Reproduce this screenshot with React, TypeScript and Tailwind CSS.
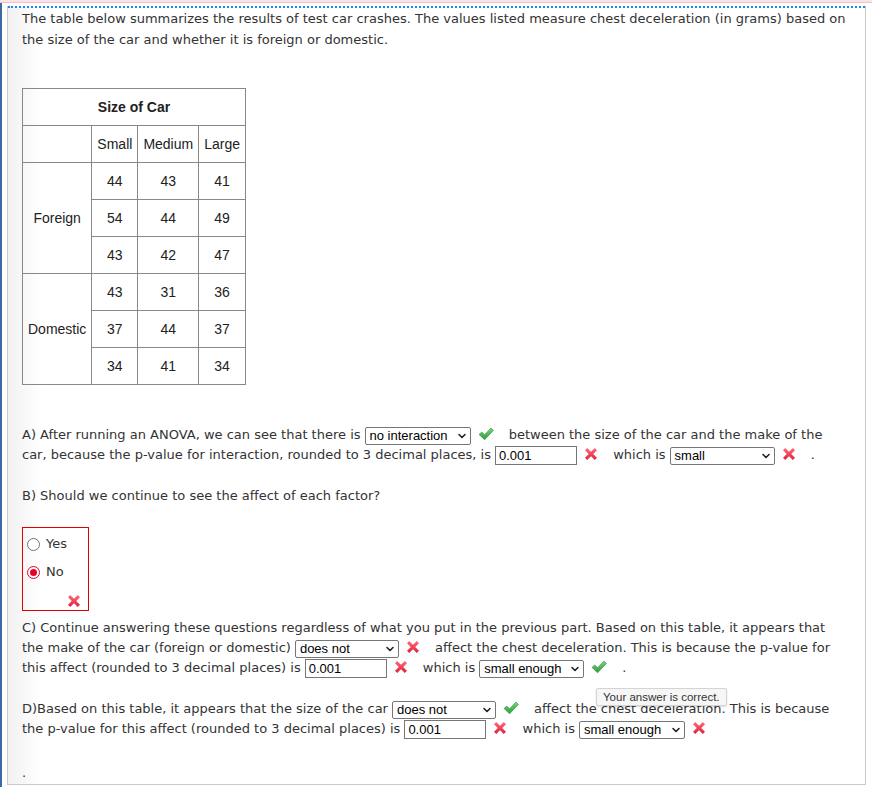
import React from 'react';

const Check = () => (
  <svg width="16" height="14" viewBox="0 0 16 14" className="inline-block align-[-2px]">
    <defs>
      <linearGradient id="cg" x1="0" y1="0" x2="0" y2="1">
        <stop offset="0" stopColor="#7fd67f" />
        <stop offset="1" stopColor="#2c9a3c" />
      </linearGradient>
    </defs>
    <path d="M1 7.5 L3.8 5 L6.6 7.8 L13 1 L15.4 3.4 L6.6 12.8 Z" fill="url(#cg)" stroke="#2f8f3a" strokeWidth="0.6" />
  </svg>
);

const Cross = () => (
  <svg width="14" height="14" viewBox="0 0 14 14" className="inline-block align-[-2px]">
    <defs>
      <linearGradient id="xg" x1="0" y1="0" x2="0" y2="1">
        <stop offset="0" stopColor="#ff6b7d" />
        <stop offset="1" stopColor="#e0203a" />
      </linearGradient>
    </defs>
    <path
      d="M1 3.2 L3.2 1 L7 4.8 L10.8 1 L13 3.2 L9.2 7 L13 10.8 L10.8 13 L7 9.2 L3.2 13 L1 10.8 L4.8 7 Z"
      fill="url(#xg)"
    />
  </svg>
);

const Chevron = () => (
  <svg width="10" height="10" viewBox="0 0 10 10" className="shrink-0">
    <path d="M2 3.5 L5 6.5 L8 3.5" fill="none" stroke="#222" strokeWidth="1.6" strokeLinecap="round" strokeLinejoin="round" />
  </svg>
);

const Select = ({ w, label }: { w: string; label: string }) => (
  <span
    className={`inline-flex ${w} h-[18px] items-center justify-between align-middle border border-[#767676] rounded-[2px] bg-white pl-[4px] pr-[3px] text-[13px] leading-none text-black font-['Liberation_Sans',Arial,sans-serif] ml-[4px]`}
  >
    <span>{label}</span>
    <Chevron />
  </span>
);

const Input = ({ w }: { w: string }) => (
  <span
    className={`inline-flex ${w} h-[19px] items-center align-middle border border-[#767676] bg-white pl-[3px] text-[13px] leading-none text-black font-['Liberation_Sans',Arial,sans-serif] ml-[4px]`}
  >
    0.001
  </span>
);

const Mark = ({ ok }: { ok: boolean }) => (
  <span className="inline-block ml-[7px] mr-[11px]">{ok ? <Check /> : <Cross />}</span>
);

const cell = 'border border-[#888] h-[37px] px-[5px] text-center';

const rows = [
  ['44', '43', '41'],
  ['54', '44', '49'],
  ['43', '42', '47'],
  ['43', '31', '36'],
  ['37', '44', '37'],
  ['34', '41', '34'],
];

export default function App() {
  return (
    <div className="w-[872px] h-[787px] bg-white overflow-hidden flex flex-col font-['DejaVu_Sans',Verdana,sans-serif] text-[13px] text-[#333]">
      <div className="h-[3px] bg-[#fbe3e8] border-b border-[#f0c4cc] shrink-0" />
      <div className="flex flex-1 min-h-0">
        <div className="w-[2px] bg-[#3d6aa0] shrink-0" />
        <div className="w-[5px] shrink-0" />
        <div className="w-[859px] flex flex-col border-r border-b border-l border-[#c9c9c9] mt-[3px] mb-[2px] bg-[linear-gradient(90deg,#f1f1f1,#ffffff_34px)]">
          <div className="h-0 border-t-2 border-dotted border-[#1e88e5]" />
          <div className="relative flex-1 pl-[14px] pr-[12px]">
            <p className="leading-[21px] whitespace-nowrap">
              The table below summarizes the results of test car crashes. The values listed measure chest deceleration (in grams) based on
              <br />
              the size of the car and whether it is foreign or domestic.
            </p>

            <table className="mt-[38px] border-collapse text-[14px] text-[#222] font-['Liberation_Sans',Arial,sans-serif]">
              <tbody>
                <tr>
                  <th colSpan={4} className={`${cell} font-bold w-[223px]`}>
                    Size of Car
                  </th>
                </tr>
                <tr>
                  <td className={`${cell} w-[69px]`}></td>
                  <td className={cell}>Small</td>
                  <td className={cell}>Medium</td>
                  <td className={cell}>Large</td>
                </tr>
                {rows.map((r, i) => (
                  <tr key={i}>
                    {i % 3 === 0 && (
                      <td rowSpan={3} className={cell}>
                        {i === 0 ? 'Foreign' : 'Domestic'}
                      </td>
                    )}
                    {r.map((v, j) => (
                      <td key={j} className={cell}>
                        {v}
                      </td>
                    ))}
                  </tr>
                ))}
              </tbody>
            </table>

            <p className="mt-[40px] leading-[20px] whitespace-nowrap">
              A) After running an ANOVA, we can see that there is
              <Select w="w-[106px]" label="no interaction" />
              <Mark ok />
              {' '}between the size of the car and the make of the
              <br />
              car, because the p-value for interaction, rounded to 3 decimal places, is
              <Input w="w-[82px]" />
              <Mark ok={false} />
              {' '}which is
              <Select w="w-[105px]" label="small" />
              <Mark ok={false} />
              {' '}.
            </p>

            <p className="mt-[21px] leading-[20px]">B) Should we continue to see the affect of each factor?</p>

            <div className="mt-[21px] w-[67px] h-[84px] border border-[#e00000] flex flex-col pl-[4px] pt-[9px]">
              <label className="flex items-center gap-[6px] h-[14px]">
                <span className="w-[13px] h-[13px] rounded-full border border-[#767676] bg-white" />
                <span>Yes</span>
              </label>
              <label className="flex items-center gap-[6px] h-[14px] mt-[14px]">
                <span className="w-[13px] h-[13px] rounded-full border-[1.5px] border-[#e4002b] bg-white flex items-center justify-center">
                  <span className="w-[7px] h-[7px] rounded-full bg-[#e4002b]" />
                </span>
                <span>No</span>
              </label>
              <div className="mt-[13px] ml-[40px]">
                <Cross />
              </div>
            </div>

            <p className="mt-[7px] leading-[20px] whitespace-nowrap">
              C) Continue answering these questions regardless of what you put in the previous part. Based on this table, it appears that
              <br />
              the make of the car (foreign or domestic)
              <Select w="w-[104px]" label="does not" />
              <Mark ok={false} />
              {' '}affect the chest deceleration. This is because the p-value for
              <br />
              this affect (rounded to 3 decimal places) is
              <Input w="w-[82px]" />
              <Mark ok={false} />
              {' '}which is
              <Select w="w-[105px]" label="small enough" />
              <Mark ok />
              {' '}.
            </p>

            <p className="mt-[21px] leading-[20px] whitespace-nowrap">
              D)Based on this table, it appears that the size of the car
              <Select w="w-[104px]" label="does not" />
              <Mark ok />
              {' '}affect the chest deceleration. This is because
              <br />
              the p-value for this affect (rounded to 3 decimal places) is
              <Input w="w-[82px]" />
              <Mark ok={false} />
              {' '}which is
              <Select w="w-[106px]" label="small enough" />
              <Mark ok={false} />
            </p>

            <p className="mt-[24px] leading-[20px]">.</p>

            <div className="absolute left-[588px] top-[680px] px-[6px] py-[1px] bg-[#f6f6f6] border border-[#d4d4d4] rounded-[2px] shadow-[0_1px_2px_rgba(0,0,0,0.15)] text-[11.5px] leading-[14px] text-[#333] font-['Liberation_Sans',Arial,sans-serif] whitespace-nowrap">
              Your answer is correct.
            </div>
          </div>
        </div>
      </div>
    </div>
  );
}
